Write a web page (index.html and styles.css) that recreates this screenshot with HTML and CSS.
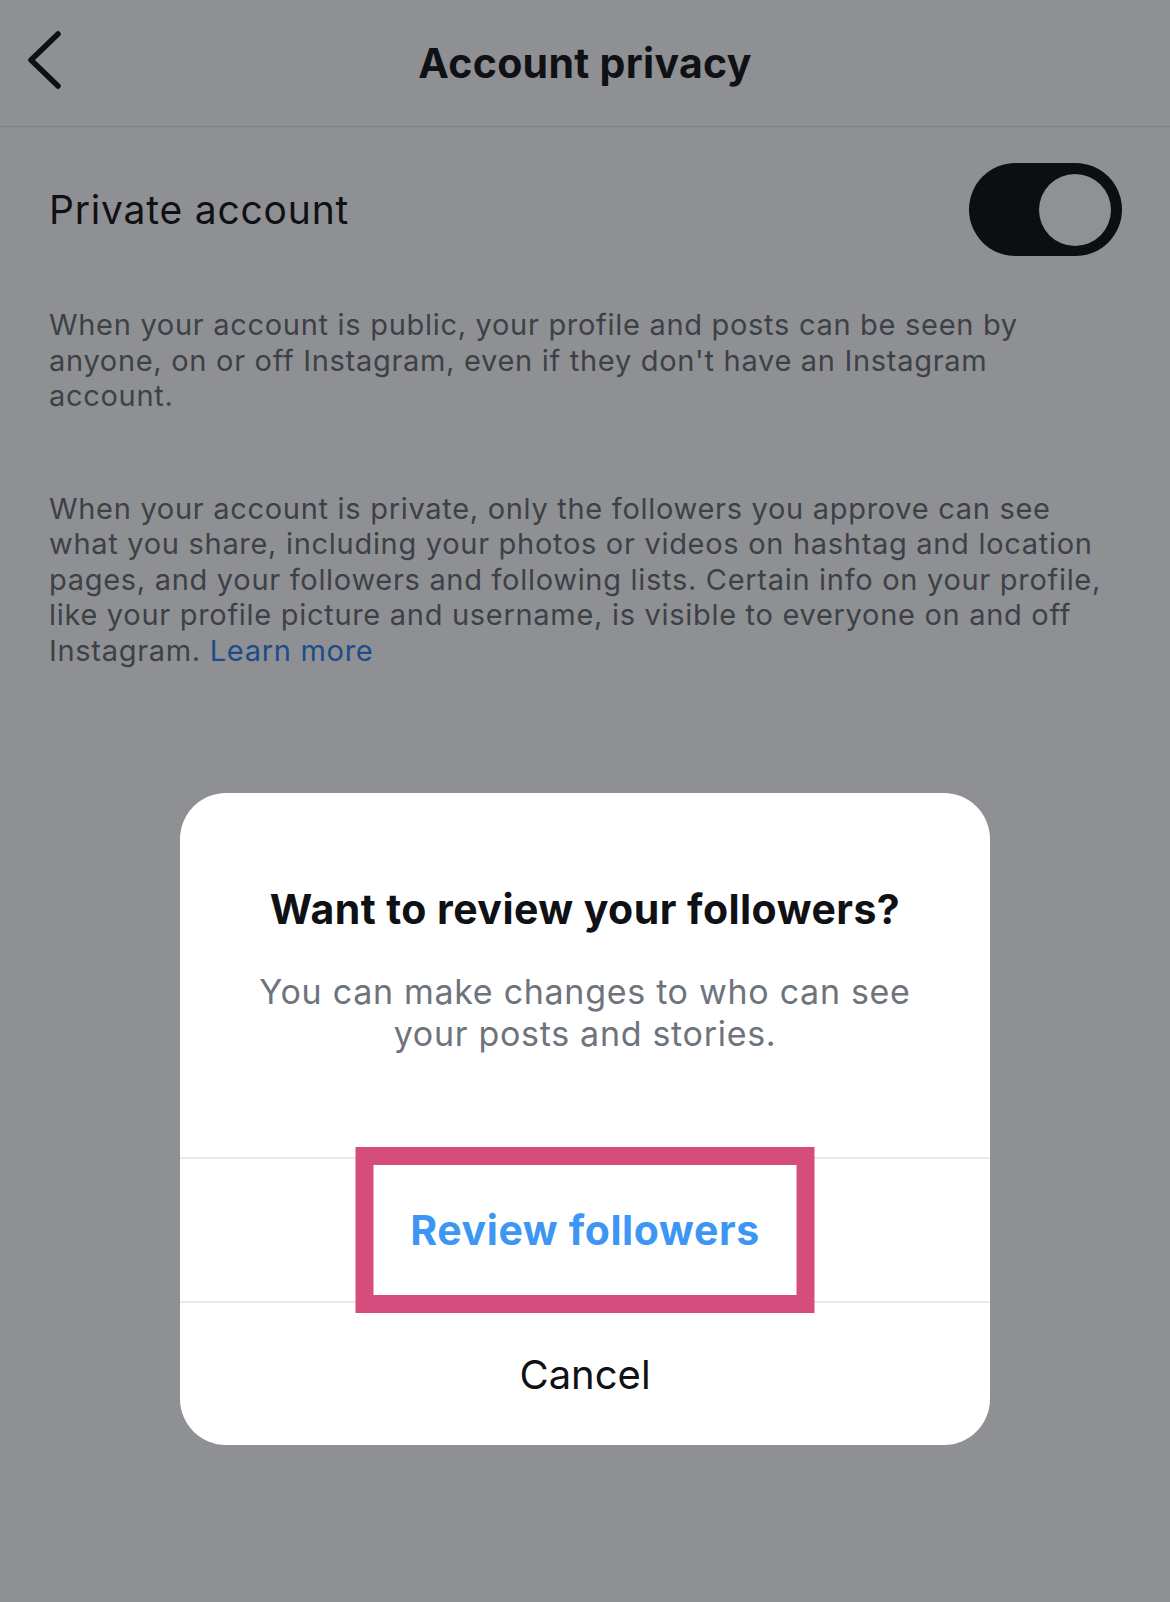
FILE: index.html
```html
<!DOCTYPE html>
<html lang="en">
<head>
    <meta charset="UTF-8">
    <meta name="viewport" content="width=device-width, initial-scale=1.0">
    <title>Account privacy</title>
    <link rel="stylesheet" href="styles.css">
</head>
<body>
    <header class="top-bar">
        <button class="back-button" aria-label="Back">
            <svg width="40" height="64" viewBox="0 0 40 64">
                <path d="M31 5 L4 31 L31 57" fill="none" stroke="#0e1013" stroke-width="5.5" stroke-linecap="round" stroke-linejoin="round"/>
            </svg>
        </button>
        <h1 class="top-title">Account privacy</h1>
    </header>

    <main class="content">
        <div class="setting-row">
            <span class="setting-label">Private account</span>
            <div class="toggle is-on"><div class="toggle-knob"></div></div>
        </div>

        <p class="info-text first">When your account is public, your profile and posts can be seen by<br>
            anyone, on or off Instagram, even if they don't have an Instagram<br>
            account.</p>

        <p class="info-text">When your account is private, only the followers you approve can see<br>
            what you share, including your photos or videos on hashtag and location<br>
            pages, and your followers and following lists. Certain info on your profile,<br>
            like your profile picture and username, is visible to everyone on and off<br>
            Instagram. <a href="#" class="learn-more">Learn more</a></p>
    </main>

    <div class="dialog">
        <div class="dialog-body">
            <h2 class="dialog-title">Want to review your followers?</h2>
            <p class="dialog-text">You can make changes to who can see your posts and stories.</p>
        </div>
        <button class="dialog-button primary">
            Review followers
            <span class="highlight-box"></span>
        </button>
        <button class="dialog-button">Cancel</button>
    </div>
</body>
</html>
```

FILE: styles.css
```css
body {
    margin: 0;
    width: 1170px;
    height: 1602px;
    background: #8f9093;
    font-family: Inter, "Liberation Sans", sans-serif;
    color: #0f1114;
    position: relative;
    overflow: hidden;
}

.top-bar {
    height: 126px;
    border-bottom: 1px solid #818285;
    display: flex;
    align-items: center;
    justify-content: center;
    position: relative;
}

.back-button {
    position: absolute;
    left: 27px;
    top: 29px;
    padding: 0;
    border: none;
    background: none;
    display: flex;
}

.top-title {
    margin: 0;
    font-size: 41px;
    font-weight: 700;
    letter-spacing: 0.3px;
}

.content {
    padding: 0 40px 0 49px;
}

.setting-row {
    display: flex;
    align-items: center;
    justify-content: space-between;
    padding-top: 36px;
    padding-right: 8px;
}

.setting-label {
    font-size: 39px;
    letter-spacing: 0.8px;
}

.toggle {
    width: 153px;
    height: 93px;
    border-radius: 47px;
    background: #0c0e12;
    display: flex;
    align-items: center;
    justify-content: flex-end;
    padding: 0 11px;
    box-sizing: border-box;
}

.toggle-knob {
    width: 72px;
    height: 72px;
    border-radius: 50%;
    background: #909194;
}

.info-text {
    margin: 77px 0 0;
    font-size: 29px;
    line-height: 35.5px;
    color: #3d4147;
    letter-spacing: 0.7px;
    white-space: nowrap;
}

.info-text.first {
    margin-top: 51px;
}

.learn-more {
    color: #1d4c8a;
    text-decoration: none;
}

.dialog {
    position: absolute;
    left: 180px;
    top: 793px;
    width: 810px;
    background: #fff;
    border-radius: 46px;
}

.dialog-body {
    padding: 92px 64px 102px;
    text-align: center;
}

.dialog-title {
    margin: 0;
    font-size: 41px;
    line-height: 48px;
    font-weight: 700;
    letter-spacing: 0.45px;
}

.dialog-text {
    margin: 38px 0 0;
    font-size: 34px;
    line-height: 42px;
    color: #6e737c;
    letter-spacing: 0.7px;
}

.dialog-button {
    display: block;
    width: 100%;
    height: 144px;
    border: none;
    border-top: 2px solid #e8eaed;
    background: none;
    font-family: inherit;
    font-size: 40px;
    color: #0f1114;
    position: relative;
    padding: 0;
}

.dialog-button.primary {
    color: #3e96f4;
    font-weight: 700;
    font-size: 41px;
    letter-spacing: 0.6px;
}

.highlight-box {
    position: absolute;
    left: 50%;
    top: 50%;
    z-index: 1;
    width: 459px;
    height: 166px;
    transform: translate(-50%, -50%);
    border: 18px solid #d54d7c;
    box-sizing: border-box;
}
```
